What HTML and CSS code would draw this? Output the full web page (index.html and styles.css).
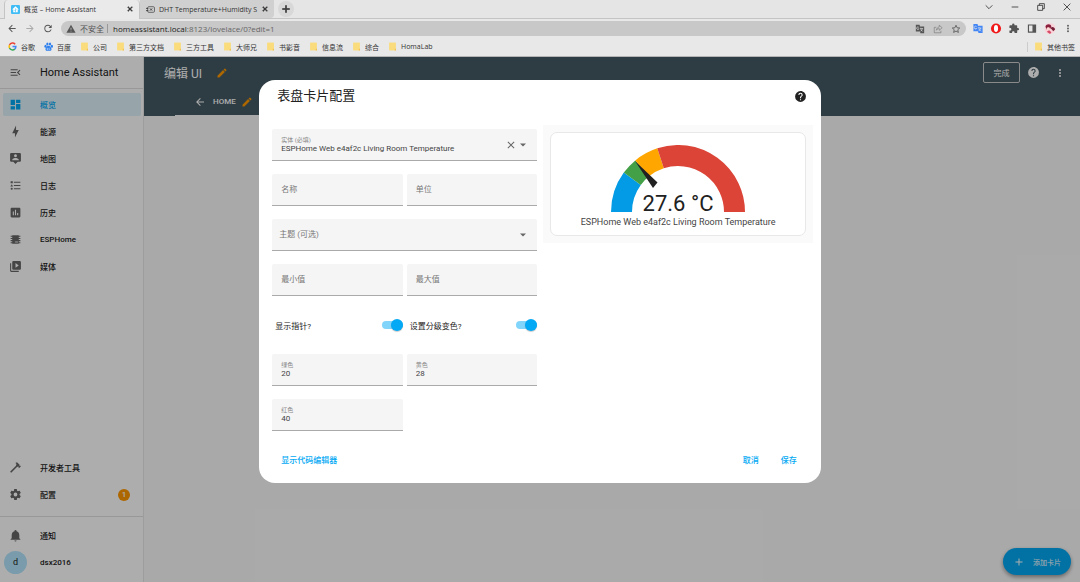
FILE: index.html
```
<!DOCTYPE html>
<html lang="zh-CN">

<head>
    <meta charset="UTF-8">
    <title>概览 – Home Assistant</title>
    <link rel="stylesheet" href="styles.css">
</head>

<body>
    <svg class="sprite" width="0" height="0">
        <symbol id="close" viewBox="0 0 24 24"><path d="M19,6.41L17.59,5L12,10.59L6.41,5L5,6.41L10.59,12L5,17.59L6.41,19L12,13.41L17.59,19L19,17.59L13.41,12L19,6.41Z" /></symbol>
        <symbol id="plus" viewBox="0 0 24 24"><path d="M19,13H13V19H11V13H5V11H11V5H13V11H19V13Z" /></symbol>
        <symbol id="back" viewBox="0 0 24 24"><path d="M20,11V13H8L13.5,18.5L12.08,19.92L4.16,12L12.08,4.08L13.5,5.5L8,11H20Z" /></symbol>
        <symbol id="forward" viewBox="0 0 24 24"><path d="M4,11V13H16L10.5,18.5L11.92,19.92L19.84,12L11.92,4.08L10.5,5.5L16,11H4Z" /></symbol>
        <symbol id="dots" viewBox="0 0 24 24"><path d="M12,16A2,2 0 0,1 14,18A2,2 0 0,1 12,20A2,2 0 0,1 10,18A2,2 0 0,1 12,16M12,10A2,2 0 0,1 14,12A2,2 0 0,1 12,14A2,2 0 0,1 10,12A2,2 0 0,1 12,10M12,4A2,2 0 0,1 14,6A2,2 0 0,1 12,8A2,2 0 0,1 10,6A2,2 0 0,1 12,4Z" /></symbol>
        <symbol id="pencil" viewBox="0 0 24 24"><path d="M20.71,7.04C21.1,6.65 21.1,6 20.71,5.63L18.37,3.29C18,2.9 17.35,2.9 16.96,3.29L15.12,5.12L18.87,8.87M3,17.25V21H6.75L17.81,9.93L14.06,6.18L3,17.25Z" /></symbol>
        <symbol id="help" viewBox="0 0 24 24"><path d="M15.07,11.25L14.17,12.17C13.45,12.89 13,13.5 13,15H11V14.5C11,13.39 11.45,12.39 12.17,11.67L13.41,10.41C13.78,10.05 14,9.55 14,9C14,7.89 13.1,7 12,7A2,2 0 0,0 10,9H8A4,4 0 0,1 12,5A4,4 0 0,1 16,9C16,9.88 15.64,10.67 15.07,11.25M13,19H11V17H13M12,2A10,10 0 0,0 2,12A10,10 0 0,0 12,22A10,10 0 0,0 22,12C22,6.47 17.5,2 12,2Z" /></symbol>
        <symbol id="down" viewBox="0 0 24 24"><path d="M6,9L12,15L18,9H6Z" /></symbol>
        <symbol id="folder" viewBox="0 0 16 16"><path fill="#fbdc7c" d="M2 1h12v14H2z" /><path fill="#f0bf4c" d="M12 12h2v3h-2z" /></symbol>
        <symbol id="translate" viewBox="0 0 24 24"><path d="M2 2h9l1 4h10v16h-9l-1-4H2z" /><path d="M9 8a3 3 0 1 0 0 4H6.500M14 9v1.500M11.500 11h8M17.500 11c-.5 3-2 5-4 6.500M13.500 13l5 5" fill="none" stroke="#e8e8e8" stroke-width="1.500" /></symbol>
    </svg>

    <header class="browser">
        <div class="tabs">
            <div class="tab active">
                <svg class="fav" viewBox="0 0 16 16"><rect width="16" height="16" rx="2" fill="#41bdf5" /><path d="M8 2L2 8h2v5h8V8h2z" fill="#fff" /><path d="M8 13V6M8 11L6 9M8 10l2-2" stroke="#41bdf5" fill="none" /></svg>
                <span>概览 – Home Assistant</span>
                <button aria-label="关闭"><svg><use href="#close" /></svg></button>
            </div>
            <div class="tab">
                <svg class="fav" viewBox="0 0 16 16"><rect x="3" y="3" width="12" height="10" rx="2" fill="none" stroke="#555" stroke-width="1.500" /><path d="M7 6l4 4M11 6l-4 4M0 6h4M0 10h4" stroke="#333" stroke-width="1.500" /></svg>
                <span>DHT Temperature+Humidity S</span>
                <button aria-label="关闭"><svg><use href="#close" /></svg></button>
            </div>
            <button class="new" aria-label="新标签页"><svg><use href="#plus" /></svg></button>
            <div class="window">
                <button aria-label="搜索标签页"><svg viewBox="0 0 12 12"><path d="M2 4l4 4 4-4" /></svg></button>
                <button aria-label="最小化"><svg viewBox="0 0 12 12"><path d="M2 6h8" /></svg></button>
                <button aria-label="还原"><svg viewBox="0 0 12 12"><path d="M2 4h6v6H2zM4 4V2h6v6H8" /></svg></button>
                <button aria-label="关闭窗口"><svg viewBox="0 0 12 12"><path d="M2 2l8 8M10 2l-8 8" /></svg></button>
            </div>
        </div>
        <div class="toolbar">
            <button aria-label="后退"><svg><use href="#back" /></svg></button>
            <button class="off" aria-label="前进"><svg><use href="#forward" /></svg></button>
            <button aria-label="刷新"><svg viewBox="0 0 24 24"><path d="M17.65,6.35C16.2,4.9 14.21,4 12,4A8,8 0 0,0 4,12A8,8 0 0,0 12,20C15.73,20 18.84,17.45 19.73,14H17.65C16.83,16.33 14.61,18 12,18A6,6 0 0,1 6,12A6,6 0 0,1 12,6C13.66,6 15.14,6.69 16.22,7.78L13,11H20V4L17.65,6.35Z" /></svg></button>
            <div class="address">
                <svg viewBox="0 0 24 24"><path d="M13,14H11V9H13M13,18H11V16H13M1,21H23L12,2L1,21Z" /></svg>
                <span class="unsafe">不安全</span>
                <span class="url"><b>homeassistant.local</b>:8123/lovelace/0?edit=1</span>
                <button aria-label="翻译"><svg><use href="#translate" /></svg></button>
                <button aria-label="分享"><svg viewBox="0 0 24 24"><path d="M8 8H3v13h16v-5M15 3l7 6-7 6v-4c-3 0-5 1-7 4 1-5 3-7 7-8z" fill="none" stroke="#777" stroke-width="1.500" /></svg></button>
                <button aria-label="收藏"><svg viewBox="0 0 24 24"><path d="M12 3l2.700 6 6.300.6-4.800 4.300 1.500 6.300L12 17l-5.700 3.200 1.500-6.300L3 9.600 9.300 9z" fill="none" stroke="#555" stroke-width="2" /></svg></button>
            </div>
            <button class="blue" aria-label="翻译扩展"><svg><use href="#translate" /></svg></button>
            <button aria-label="Opera"><svg viewBox="0 0 24 24"><circle cx="12" cy="12" r="11" fill="#f01818" /><ellipse cx="12" cy="12" rx="4.500" ry="7.500" fill="#fff" /></svg></button>
            <button aria-label="扩展程序"><svg viewBox="0 0 24 24"><path d="M20.500,11H19V7C19,5.890 18.100,5 17,5H13V3.500A2.500,2.500 0 0,0 10.500,1A2.500,2.500 0 0,0 8,3.500V5H4A2,2 0 0,0 2,7V10.800H3.500C5,10.800 6.200,12 6.200,13.500C6.200,15 5,16.200 3.500,16.200H2V20A2,2 0 0,0 4,22H7.800V20.500C7.800,19 9,17.800 10.500,17.800C12,17.800 13.200,19 13.200,20.500V22H17A2,2 0 0,0 19,20V16H20.500A2.500,2.500 0 0,0 23,13.500A2.500,2.500 0 0,0 20.500,11Z" /></svg></button>
            <button aria-label="侧边栏"><svg viewBox="0 0 24 24"><path d="M3 3h18v18H3zM5.500 5.500v13H13v-13z" fill-rule="evenodd" /></svg></button>
            <button aria-label="用户"><svg class="person" viewBox="0 0 24 24"><circle cx="12" cy="12" r="12" fill="#f8d4da" /><path d="M2 8c2-7 12-7 13 0l-3 5-2-4-5 5z" fill="#8a1f3d" /><path d="M13 11c4-4 9-2 10 3l-4 4-3-4z" fill="#752038" /><circle cx="8" cy="12" r="3" fill="#fbd9cf" /><path d="M5 19l5-3 5 4-3 4z" fill="#d84b66" /></svg></button>
            <button aria-label="菜单"><svg><use href="#dots" /></svg></button>
        </div>
        <nav class="bookmarks">
            <a href="#"><svg viewBox="0 0 24 24"><path fill="none" stroke="#ea4335" stroke-width="4" d="M19 6A9 9 0 0 0 4 8" /><path fill="none" stroke="#fbbc05" stroke-width="4" d="M4 8a9 9 0 0 0 0 8" /><path fill="none" stroke="#34a853" stroke-width="4" d="M4 16a9 9 0 0 0 14 3" /><path fill="none" stroke="#4285f4" stroke-width="4" d="M18 19a9 9 0 0 0 3-7h-9" /></svg>谷歌</a>
            <a href="#"><svg viewBox="0 0 24 24"><g fill="#2f80ee"><ellipse cx="4" cy="11" rx="3" ry="4" /><ellipse cx="9" cy="5" rx="3" ry="4" /><ellipse cx="16" cy="5" rx="3" ry="4" /><ellipse cx="21" cy="11" rx="3" ry="4" /><path d="M12 10c4 0 8 6 8 9 0 6-5 4-8 4s-8 2-8-4c0-3 4-9 8-9z" /></g><path d="M8 17h3v3H8zM14 15v5h3" stroke="#fff" fill="none" /></svg>百度</a>
            <a href="#"><svg><use href="#folder" /></svg>公司</a>
            <a href="#"><svg><use href="#folder" /></svg>第三方文档</a>
            <a href="#"><svg><use href="#folder" /></svg>三方工具</a>
            <a href="#"><svg><use href="#folder" /></svg>大师兄</a>
            <a href="#"><svg><use href="#folder" /></svg>书影音</a>
            <a href="#"><svg><use href="#folder" /></svg>信息流</a>
            <a href="#"><svg><use href="#folder" /></svg>综合</a>
            <a href="#"><svg><use href="#folder" /></svg>HomaLab</a>
            <a class="other" href="#"><svg><use href="#folder" /></svg>其他书签</a>
        </nav>
    </header>

    <div class="app">
        <aside>
            <div class="brand">
                <svg viewBox="0 0 24 24"><path d="M21,15.61L19.59,17L14.58,12L19.59,7L21,8.39L17.44,12L21,15.61M3,6H16V8H3V6M3,13V11H13V13H3M3,18V16H16V18H3Z" /></svg>
                <span>Home Assistant</span>
            </div>
            <nav class="menu">
                <a class="selected" href="#"><svg viewBox="0 0 24 24"><path d="M13,3V9H21V3M13,21H21V11H13M3,21H11V15H3M3,13H11V3H3V13Z" /></svg>概览</a>
                <a href="#"><svg viewBox="0 0 24 24"><path d="M11 15H6L13 1V9H18L11 23V15Z" /></svg>能源</a>
                <a href="#"><svg viewBox="0 0 24 24"><path d="M20,2H4A2,2 0 0,0 2,4V16A2,2 0 0,0 4,18H8L12,22L16,18H20A2,2 0 0,0 22,16V4A2,2 0 0,0 20,2M12,4.300C13.500,4.300 14.700,5.500 14.700,7C14.700,8.500 13.500,9.700 12,9.700C10.500,9.700 9.300,8.500 9.300,7C9.300,5.500 10.500,4.300 12,4.300M18,15H6V14.100C6,12.100 10,11 12,11C14,11 18,12.100 18,14.100V15Z" /></svg>地图</a>
                <a href="#"><svg viewBox="0 0 24 24"><path d="M5,9.500L7.500,14H2.500L5,9.500M3,4H7V8H3V4M5,20A2,2 0 0,0 7,18A2,2 0 0,0 5,16A2,2 0 0,0 3,18A2,2 0 0,0 5,20M9,5V7H21V5H9M9,19H21V17H9V19M9,13H21V11H9V13Z" /></svg>日志</a>
                <a href="#"><svg viewBox="0 0 24 24"><path d="M9 17H7V10H9V17M13 17H11V7H13V17M17 17H15V13H17V17M19 3H5C3.900 3 3 3.900 3 5V19C3 20.100 3.900 21 5 21H19C20.100 21 21 20.100 21 19V5C21 3.900 20.100 3 19 3Z" /></svg>历史</a>
                <a href="#"><svg viewBox="0 0 24 24"><path d="M6,4H18V5H21V7H18V9H21V11H18V13H21V15H18V17H21V19H18V20H6V19H3V17H6V15H3V13H6V11H3V9H6V7H3V5H6V4M11,15V18H12V15H11M13,15V18H14V15H13M15,15V18H16V15H15Z" /></svg>ESPHome</a>
                <a href="#"><svg viewBox="0 0 24 24"><path d="M4,6H2V20A2,2 0 0,0 4,22H18V20H4V6M20,2H8A2,2 0 0,0 6,4V16A2,2 0 0,0 8,18H20A2,2 0 0,0 22,16V4A2,2 0 0,0 20,2M12,14.500V5.500L18,10L12,14.500Z" /></svg>媒体</a>
            </nav>
            <nav class="menu">
                <a href="#"><svg viewBox="0 0 24 24"><path d="M2,19.630L13.430,8.200L12.720,7.500L14.140,6.070L12,3.890C13.200,2.700 15.090,2.700 16.270,3.890L19.870,7.500L18.450,8.910H21.290L22,9.620L18.450,13.210L17.740,12.500V9.620L16.270,11.040L15.560,10.330L4.130,21.760L2,19.630Z" /></svg>开发者工具</a>
                <a href="#"><svg viewBox="0 0 24 24"><path d="M12,15.500A3.500,3.500 0 0,1 8.500,12A3.500,3.500 0 0,1 12,8.500A3.500,3.500 0 0,1 15.500,12A3.500,3.500 0 0,1 12,15.500M19.430,12.970C19.470,12.650 19.500,12.330 19.500,12C19.500,11.670 19.470,11.340 19.430,11L21.540,9.370C21.730,9.220 21.780,8.950 21.660,8.730L19.660,5.270C19.540,5.050 19.270,4.960 19.050,5.050L16.560,6.050C16.040,5.660 15.500,5.320 14.870,5.070L14.500,2.420C14.460,2.180 14.250,2 14,2H10C9.750,2 9.540,2.180 9.500,2.420L9.130,5.070C8.500,5.320 7.960,5.660 7.440,6.050L4.950,5.050C4.730,4.960 4.460,5.050 4.340,5.270L2.340,8.730C2.210,8.950 2.270,9.220 2.460,9.370L4.570,11C4.530,11.340 4.500,11.670 4.500,12C4.500,12.330 4.530,12.650 4.570,12.970L2.460,14.630C2.270,14.780 2.210,15.050 2.340,15.270L4.340,18.730C4.460,18.950 4.730,19.030 4.950,18.950L7.440,17.940C7.960,18.340 8.500,18.680 9.130,18.930L9.500,21.580C9.540,21.820 9.750,22 10,22H14C14.250,22 14.460,21.820 14.500,21.580L14.870,18.930C15.500,18.670 16.040,18.340 16.560,17.940L19.050,18.950C19.270,19.030 19.540,18.950 19.660,18.730L21.660,15.270C21.780,15.050 21.730,14.780 21.540,14.630L19.430,12.970Z" /></svg>配置<span class="badge">1</span></a>
            </nav>
            <nav class="menu user">
                <a href="#"><svg viewBox="0 0 24 24"><path d="M21,19V20H3V19L5,17V11C5,7.900 7.030,5.170 10,4.290C10,4.190 10,4.100 10,4A2,2 0 0,1 12,2A2,2 0 0,1 14,4C14,4.100 14,4.190 14,4.290C16.970,5.170 19,7.900 19,11V17L21,19M14,21A2,2 0 0,1 12,23A2,2 0 0,1 10,21" /></svg>通知</a>
                <a href="#"><span class="avatar">d</span>dsx2016</a>
            </nav>
        </aside>

        <main>
            <div class="top">
                <div class="row">
                    <span class="heading">编辑 UI</span>
                    <button class="edit" aria-label="编辑标题"><svg><use href="#pencil" /></svg></button>
                    <button class="done">完成</button>
                    <button aria-label="帮助"><svg class="big"><use href="#help" /></svg></button>
                    <button aria-label="更多"><svg><use href="#dots" /></svg></button>
                </div>
                <div class="view">
                    <button aria-label="左移"><svg><use href="#back" /></svg></button>
                    <span>HOME</span>
                    <button class="edit" aria-label="编辑视图"><svg><use href="#pencil" /></svg></button>
                </div>
            </div>
            <button class="fab"><svg><use href="#plus" /></svg>添加卡片</button>
        </main>

        <div class="scrim">
            <div class="dialog" role="dialog" aria-labelledby="title">
                <div class="title">
                    <h2 id="title">表盘卡片配置</h2>
                    <button aria-label="帮助"><svg class="big"><use href="#help" /></svg></button>
                </div>
                <div class="content">
                    <form class="form">
                        <div class="field wide">
                            <div class="text">
                                <label for="entity">实体 (必填)</label>
                                <input id="entity" value="ESPHome Web e4af2c Living Room Temperature">
                            </div>
                            <button type="button" aria-label="清除"><svg><use href="#close" /></svg></button>
                            <button type="button" aria-label="展开"><svg><use href="#down" /></svg></button>
                        </div>
                        <div class="field"><input aria-label="名称" placeholder="名称"></div>
                        <div class="field"><input aria-label="单位" placeholder="单位"></div>
                        <div class="field wide theme">
                            <select aria-label="主题">
                                <option>主题 (可选)</option>
                            </select>
                            <svg><use href="#down" /></svg>
                        </div>
                        <div class="field"><input aria-label="最小值" placeholder="最小值"></div>
                        <div class="field"><input aria-label="最大值" placeholder="最大值"></div>
                        <label class="switch">显示指针?<input type="checkbox" checked></label>
                        <label class="switch">设置分级变色?<input type="checkbox" checked></label>
                        <div class="field">
                            <div class="text">
                                <label for="green">绿色</label>
                                <input id="green" value="20">
                            </div>
                        </div>
                        <div class="field">
                            <div class="text">
                                <label for="yellow">黄色</label>
                                <input id="yellow" value="28">
                            </div>
                        </div>
                        <div class="field">
                            <div class="text">
                                <label for="red">红色</label>
                                <input id="red" value="40">
                            </div>
                        </div>
                    </form>
                    <div class="preview">
                        <div class="card">
                            <svg class="gauge" viewBox="-67 -67 134 72">
                                <g fill="none" stroke-width="21">
                                    <path stroke="#039be5" d="M-56.500 0A56.500 56.500 0 0 1 -45.710 -33.210" />
                                    <path stroke="#43a047" d="M-45.710 -33.210A56.500 56.500 0 0 1 -36.010 -43.530" />
                                    <path stroke="#ffa600" d="M-36.010 -43.530A56.500 56.500 0 0 1 -17.460 -53.730" />
                                    <path stroke="#db4437" d="M-17.460 -53.730A56.500 56.500 0 0 1 56.500 0" />
                                </g>
                                <path fill="#212121" d="M-43 -51L-20.500 -29.500L-25 -24Z" />
                                <text y="-1" text-anchor="middle">27.6 °C</text>
                            </svg>
                            <div class="name">ESPHome Web e4af2c Living Room Temperature</div>
                        </div>
                    </div>
                </div>
                <div class="actions">
                    <button>显示代码编辑器</button>
                    <button class="cancel">取消</button>
                    <button>保存</button>
                </div>
            </div>
        </div>
    </div>
</body>

</html>
```
FILE: styles.css
```
* {
    box-sizing: border-box;
}

body {
    margin: 0;
    height: 100vh;
    display: flex;
    flex-direction: column;
    overflow: hidden;
    font-family: Roboto, "Noto Sans CJK SC", sans-serif;
    font-size: 8px;
    color: #212121;
}

.sprite {
    position: absolute;
}

button {
    display: flex;
    align-items: center;
    justify-content: center;
    padding: 0;
    border: 0;
    background: none;
    color: inherit;
    font: inherit;
    cursor: pointer;
}

a {
    color: inherit;
    text-decoration: none;
}

svg {
    width: 12px;
    height: 12px;
    fill: currentColor;
    flex: none;
}

/* browser */

.browser {
    background: #e8e8e8;
    border-bottom: 1px solid #b4b4b4;
    font-family: "Open Sans", "Noto Sans CJK SC", sans-serif;
    font-size: 7px;
    color: #333;
}

.tabs {
    height: 19px;
    display: flex;
    align-items: center;
    padding-left: 4px;
    border-bottom: 1px solid #c4c4c4;
    background: #e5e5e5;
}

.tab {
    width: 134px;
    height: 18px;
    display: flex;
    align-items: center;
    gap: 4px;
    padding: 0 5px 0 6px;
    background: #d0d0d0;
    border-radius: 0 0 4px 0;
}

.tab.active {
    height: 19px;
    width: 136px;
    background: #eaeaea;
    border: 1px solid #c4c4c4;
    border-width: 0 1px 0 1px;
    border-radius: 4px 4px 0 0;
}

.tab span {
    flex: 1;
    white-space: nowrap;
}

.tab .fav {
    width: 9px;
    height: 9px;
}

.tab button svg {
    width: 8px;
    height: 8px;
    stroke: #222;
    stroke-width: 2;
}

.new {
    width: 16px;
    height: 16px;
    margin-left: 4px;
    border-radius: 50%;
    background: #d8d8d8;
}

.new svg {
    stroke: #222;
}

.window {
    display: flex;
    gap: 14px;
    margin-left: auto;
    padding: 0 7px 4px 0;
}

.window svg {
    width: 12px;
    height: 10px;
    fill: none;
    stroke: #333;
}

.toolbar {
    height: 19px;
    display: flex;
    align-items: center;
    gap: 6px;
    padding: 0 6px;
    color: #555;
}

.off {
    color: #aaa;
}

.blue {
    color: #4285f4;
}

.toolbar > button svg {
    width: 12px;
    height: 11px;
}

.address {
    flex: 1;
    height: 15px;
    display: flex;
    align-items: center;
    gap: 6px;
    margin-left: 1px;
    padding: 0 4px;
    border-radius: 8px;
    background: #c8c8c8;
}

.address svg {
    width: 12px;
    height: 10px;
}

.unsafe {
    font-size: 8px;
    padding-right: 3px;
    margin-left: -3px;
    border-right: 1px solid #999;
    line-height: 9px;
}

.url {
    flex: 1;
    margin-left: -1px;
    font-size: 8px;
    color: #666;
}

.url b {
    font-weight: normal;
    color: #222;
}

.bookmarks {
    height: 18px;
    display: flex;
    align-items: center;
    gap: 9px;
    padding: 0 5px 1px 8px;
}

.bookmarks a {
    display: flex;
    align-items: center;
    gap: 4px;
}

.bookmarks svg {
    width: 9px;
    height: 9px;
}

.bookmarks .other {
    margin-left: auto;
    padding-left: 6px;
    border-left: 1px solid #ccc;
}

/* app */

.app {
    flex: 1;
    display: flex;
    position: relative;
}

aside {
    width: 144px;
    display: flex;
    flex-direction: column;
    border-right: 1px solid #e8e8e8;
    background: #fff;
}

.brand {
    height: 32px;
    display: flex;
    align-items: center;
    gap: 18px;
    padding-left: 9px;
    border-bottom: 1px solid #e0e0e0;
    font-size: 11px;
}

aside svg {
    width: 13px;
    height: 13px;
    color: #666;
}

.menu {
    display: flex;
    flex-direction: column;
    gap: 4px;
    padding: 4px 2px 0 3px;
}

.menu a {
    height: 23px;
    display: flex;
    align-items: center;
    gap: 18px;
    padding: 0 11px 0 6px;
    border-radius: 2px;
    font-weight: 500;
}

.menu .selected {
    background: #dff3fc;
    color: #03a9f4;
}

.menu .selected svg {
    color: #03a9f4;
}

.menu + .menu {
    margin-top: auto;
}

.menu.user {
    margin-top: 10px;
    padding-top: 7px;
    padding-bottom: 8px;
    border-top: 1px solid #e0e0e0;
}

.badge {
    width: 12px;
    height: 12px;
    margin-left: auto;
    border-radius: 50%;
    background: #ff9800;
    color: #fff;
    line-height: 12px;
    text-align: center;
}

.avatar {
    width: 23px;
    height: 23px;
    margin: 0 -5px;
    border-radius: 50%;
    background: #b3e5fc;
    font-size: 9px;
    font-weight: normal;
    line-height: 23px;
    text-align: center;
}

main {
    flex: 1;
    background: #fafafa;
}

.top {
    background: #455a64;
    color: #fff;
}

.row {
    height: 31px;
    display: flex;
    align-items: center;
    gap: 14px;
    padding: 0 14px 0 20px;
}

.heading {
    font-size: 12px;
}

.edit {
    color: #ff9800;
}

.done {
    width: 37px;
    height: 21px;
    margin-left: auto;
    margin-right: -7px;
    border: 1px solid #ccc;
    border-radius: 2px;
}

.big {
    width: 13px;
    height: 13px;
}

.view {
    width: 94px;
    height: 28px;
    display: flex;
    align-items: center;
    gap: 7px;
    margin-left: 31px;
    padding-left: 19px;
    border-bottom: 1px solid #fafafa;
    font-weight: 500;
}

.view .edit {
    margin-left: -2px;
}

.fab {
    position: absolute;
    right: 9px;
    bottom: 7px;
    width: 68px;
    height: 27px;
    gap: 8px;
    border-radius: 14px;
    background: #03a9f4;
    color: #fff;
    font-size: 7px;
    box-shadow: 0 2px 4px rgba(0, 0, 0, .4);
}

/* dialog */

.scrim {
    position: absolute;
    inset: 0;
    display: flex;
    align-items: flex-start;
    justify-content: center;
    padding-top: 23px;
    background: rgba(0, 0, 0, .32);
}

.dialog {
    width: 52%;
    min-width: 500px;
    border-radius: 16px;
    background: #fff;
}

.title {
    display: flex;
    align-items: center;
    justify-content: space-between;
    height: 32px;
    padding: 0 14px 0 18px;
}

h2 {
    margin: 0;
    padding-bottom: 3px;
    font-size: 13px;
    font-weight: normal;
}

.content {
    display: grid;
    grid-template-columns: 64fr 65fr;
    gap: 6px;
    padding: 13px 8px 0 13px;
}

.form {
    display: grid;
    grid-template-columns: 1fr 1fr;
    gap: 13px 4px;
    align-content: start;
    padding-top: 4px;
}

.field {
    height: 32px;
    display: flex;
    align-items: center;
    padding: 0 8px 0 9px;
    border-bottom: 1px solid #aaa;
    border-radius: 2px 2px 0 0;
    background: #f5f5f5;
    color: #666;
}

.wide {
    grid-column: span 2;
}

.text {
    flex: 1;
    display: flex;
    flex-direction: column;
    padding-top: 1px;
}

.text label {
    font-size: 6px;
    line-height: 8px;
    color: #888;
}

.field input,
.field select {
    width: 100%;
    padding: 0;
    border: 0;
    outline: none;
    appearance: none;
    background: none;
    font: inherit;
    line-height: 10px;
    color: #444;
}

.field input::placeholder {
    color: #777;
}

.theme {
    padding-left: 7px;
}

.field select {
    color: #777;
}

.switch {
    height: 32px;
    display: flex;
    align-items: center;
    justify-content: space-between;
    padding-left: 3px;
}

.switch input {
    appearance: none;
    display: grid;
    align-items: center;
    width: 21px;
    height: 12px;
    margin: 0;
}

.switch input::before,
.switch input::after {
    content: "";
    grid-area: 1 / 1;
    border-radius: 6px;
}

.switch input::before {
    height: 8px;
    background: #81d4fa;
}

.switch input::after {
    width: 12px;
    height: 12px;
    justify-self: end;
    background: #03a9f4;
    box-shadow: 0 1px 1px rgba(0, 0, 0, .2);
}

.preview {
    align-self: start;
    padding: 7px;
    background: #fafafa;
}

.card {
    height: 104px;
    display: flex;
    flex-direction: column;
    align-items: center;
    padding-top: 12px;
    border: 1px solid #e8e8e8;
    border-radius: 7px;
    background: #fff;
}

.gauge {
    width: 134px;
    height: 72px;
}

.gauge text {
    font-size: 22px;
    fill: #212121;
}

.name {
    font-size: 9px;
    line-height: 11px;
    color: #444;
}

.actions {
    height: 52px;
    display: flex;
    align-items: center;
    gap: 22px;
    padding: 5px 24px 0 22px;
    color: #03a9f4;
    font-weight: 500;
}

.cancel {
    margin-left: auto;
}
```
